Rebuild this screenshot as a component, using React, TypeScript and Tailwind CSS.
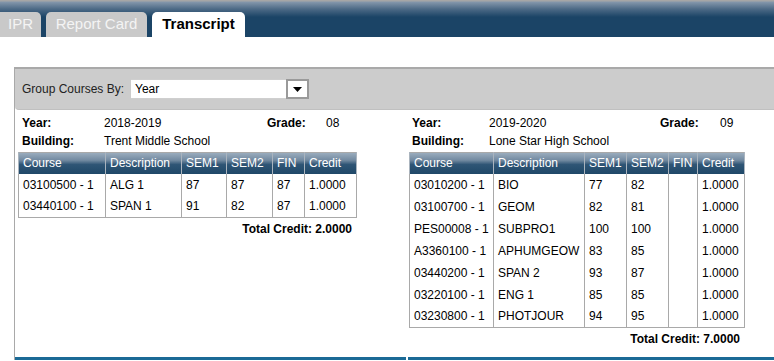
import React from "react";

type Row = { c: string; d: string; s1: string; s2: string; f: string; cr: string };

const left: Row[] = [
  { c: "03100500 - 1", d: "ALG 1", s1: "87", s2: "87", f: "87", cr: "1.0000" },
  { c: "03440100 - 1", d: "SPAN 1", s1: "91", s2: "82", f: "87", cr: "1.0000" },
];

const right: Row[] = [
  { c: "03010200 - 1", d: "BIO", s1: "77", s2: "82", f: "", cr: "1.0000" },
  { c: "03100700 - 1", d: "GEOM", s1: "82", s2: "81", f: "", cr: "1.0000" },
  { c: "PES00008 - 1", d: "SUBPRO1", s1: "100", s2: "100", f: "", cr: "1.0000" },
  { c: "A3360100 - 1", d: "APHUMGEOW", s1: "83", s2: "85", f: "", cr: "1.0000" },
  { c: "03440200 - 1", d: "SPAN 2", s1: "93", s2: "87", f: "", cr: "1.0000" },
  { c: "03220100 - 1", d: "ENG 1", s1: "85", s2: "85", f: "", cr: "1.0000" },
  { c: "03230800 - 1", d: "PHOTJOUR", s1: "94", s2: "95", f: "", cr: "1.0000" },
];

function CourseTable({ rows, widths, total }: { rows: Row[]; widths: number[]; total: string }) {
  const tw = widths.reduce((a, b) => a + b, 0);
  const heads = ["Course", "Description", "SEM1", "SEM2", "FIN", "Credit"];
  return (
    <div style={{ width: tw }}>
      <table className="border-collapse table-fixed border border-[#a9a9a9]" style={{ width: tw }}>
        <colgroup>
          {widths.map((w, i) => (
            <col key={i} style={{ width: w }} />
          ))}
        </colgroup>
        <thead>
          <tr className="h-[21px] bg-[linear-gradient(to_bottom,#9aacbd_0%,#7189a0_35%,#2f5575_55%,#1f4868_100%)]">
            {heads.map((h) => (
              <th
                key={h}
                className="text-left font-normal text-white text-[12px] leading-[14px] px-[4px] border-x border-[#aab4be] whitespace-nowrap overflow-hidden"
              >
                {h}
              </th>
            ))}
          </tr>
        </thead>
        <tbody>
          {rows.map((r) => (
            <tr key={r.c} className="h-[22px]">
              {[r.c, r.d, r.s1, r.s2, r.f, r.cr].map((v, i) => (
                <td
                  key={i}
                  className="text-[12px] leading-[14px] text-black px-[4px] border-x border-[#a9a9a9] whitespace-nowrap overflow-hidden"
                >
                  {v}
                </td>
              ))}
            </tr>
          ))}
        </tbody>
      </table>
      <div className="h-[22px] flex items-center justify-end pr-[4px] text-[12px] font-bold text-black">
        Total Credit: {total}
      </div>
    </div>
  );
}

function Info({
  year,
  grade,
  building,
  w,
}: {
  year: string;
  grade: string;
  building: string;
  w: [number, number, number];
}) {
  return (
    <div className="text-[12px] text-black">
      <div className="h-[18px] flex items-center">
        <span className="font-bold" style={{ width: w[0] }}>Year:</span>
        <span style={{ width: w[1] }}>{year}</span>
        <span className="font-bold" style={{ width: w[2] }}>Grade:</span>
        <span>{grade}</span>
      </div>
      <div className="h-[18px] flex items-center">
        <span className="font-bold" style={{ width: w[0] }}>Building:</span>
        <span>{building}</span>
      </div>
    </div>
  );
}

export default function App() {
  return (
    <div className="w-[774px] h-[361px] overflow-hidden bg-white font-['Liberation_Sans',Arial,sans-serif]">
      {/* top bar */}
      <div className="h-[37px] flex items-end gap-[5px] bg-[linear-gradient(to_bottom,#a6a6a6_0px,#a6a6a6_1px,#8497ab_2px,#4d6a86_9px,#1b4466_17px,#1b4466_100%)]">
        <div className="w-[41px] h-[25px] rounded-tr-[5px] bg-[#c9c9c9] text-[#f4f4f4] text-[15px] flex items-center justify-center">
          IPR
        </div>
        <div className="w-[101px] h-[25px] rounded-t-[5px] bg-[#c9c9c9] text-[#f4f4f4] text-[15px] flex items-center justify-center">
          Report Card
        </div>
        <div className="w-[93px] h-[25px] rounded-t-[5px] bg-white text-black font-bold text-[15px] flex items-center justify-center">
          Transcript
        </div>
      </div>

      <div className="h-[30px]" />

      {/* panel */}
      <div className="ml-[14px] border-t-2 border-l border-[#a9a9a9]">
        <div className="h-[41px] bg-[#cccccc] rounded-bl-[4px] border-b border-[#c0c0c0] flex items-center pl-[7px]">
          <span className="text-[12px] text-[#222]">Group Courses By:</span>
          <div className="ml-[7px] w-[178px] h-[20px] flex">
            <div className="flex-1 bg-white border-y border-[#cfcfcf] text-[12px] text-black pl-[4px] flex items-center">
              Year
            </div>
            <div className="w-[23px] h-[20px] border-2 border-[#9a9a9a] bg-white flex items-center justify-center">
              <svg width="9" height="5" viewBox="0 0 9 5">
                <path d="M0 0 L9 0 L4.5 5 Z" fill="#000" />
              </svg>
            </div>
          </div>
        </div>

        <div className="flex gap-[2px]">
          <div className="w-[391px] border-b-[3px] border-[#1b6a96] pt-[4px]">
            <div className="pl-[7px]">
              <Info year="2018-2019" grade="08" building="Trent Middle School" w={[82, 163, 59]} />
            </div>
            <div className="ml-[3px] mt-[2px]">
              <CourseTable rows={left} widths={[87, 76, 45, 46, 32, 52]} total="2.0000" />
            </div>
          </div>
          <div className="flex-1 border-b-[3px] border-[#1b6a96] pt-[4px] pb-[7px]">
            <div className="pl-[4px]">
              <Info year="2019-2020" grade="09" building="Lone Star High School" w={[77, 171, 60]} />
            </div>
            <div className="ml-[1px] mt-[2px]">
              <CourseTable rows={right} widths={[84, 91, 42, 42, 29, 47]} total="7.0000" />
            </div>
          </div>
        </div>
      </div>
    </div>
  );
}
